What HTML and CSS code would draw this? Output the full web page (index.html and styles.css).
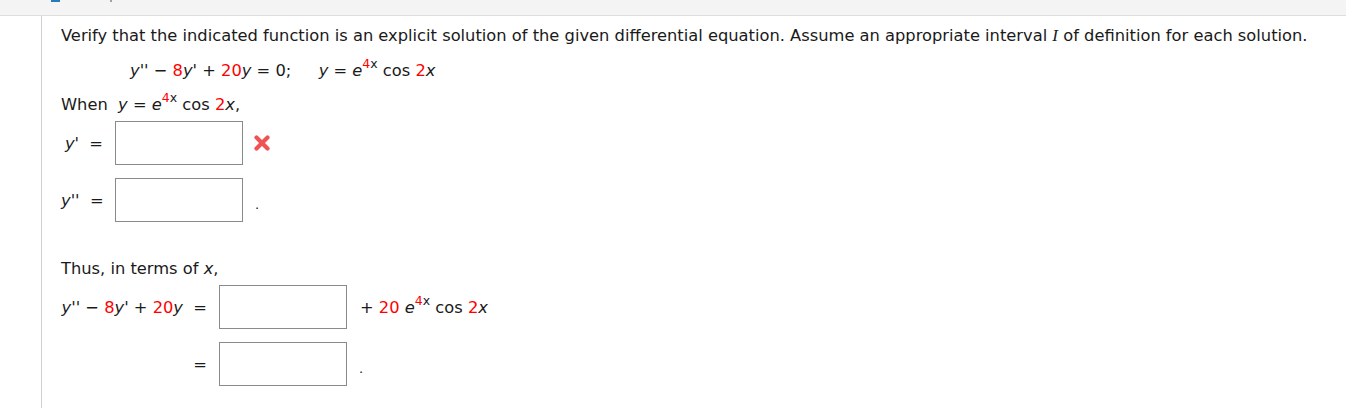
FILE: index.html
```html
<!DOCTYPE html>
<html lang="en">

<head>
    <meta charset="UTF-8">
    <title>Explicit Solution Check</title>
    <link rel="stylesheet" href="styles.css">
</head>

<body>
    <div class="topbar">
        <span class="tab-blue"></span>
        <span class="tab-grey"></span>
    </div>

    <div class="page">
        <div class="gutter"></div>
        <div class="question">
            <p class="prompt">Verify that the indicated function is an explicit solution of the given differential equation. Assume an appropriate interval <span class="serif-i">I</span> of definition for each solution.</p>

            <p class="equation">
                <i>y</i>'' &minus; <span class="red">8</span><i>y</i>' + <span class="red">20</span><i>y</i> = 0;
                <span class="space"></span>
                <i>y</i> = <i>e</i><sup><span class="red">4</span>x</sup> cos <span class="red">2</span><i>x</i>
            </p>

            <p class="when">When &nbsp;<i>y</i> = <i>e</i><sup><span class="red">4</span>x</sup> cos <span class="red">2</span><i>x</i>,</p>

            <!-- derivatives -->
            <div class="answer-row first">
                <span class="label"><i>y</i>' &nbsp;=</span>
                <input type="text" class="answer">
                <span class="mark">
                    <svg width="18" height="18" viewBox="0 0 18 18">
                        <path d="M3.5 3.5 L14.5 14.5 M14.5 3.5 L3.5 14.5" stroke="#f05353" stroke-width="4.2" stroke-linecap="round"/>
                    </svg>
                </span>
            </div>

            <div class="answer-row">
                <span class="label"><i>y</i>'' &nbsp;=</span>
                <input type="text" class="answer">
                <span class="dot">.</span>
            </div>

            <p class="thus">Thus, in terms of <i>x</i>,</p>

            <div class="answer-row sub">
                <span class="label wide"><i>y</i>'' &minus; <span class="red">8</span><i>y</i>' + <span class="red">20</span><i>y</i> &nbsp;=</span>
                <input type="text" class="answer">
                <span class="tail">+ <span class="red">20</span> <i>e</i><sup><span class="red">4</span>x</sup> cos <span class="red">2</span><i>x</i></span>
            </div>

            <div class="answer-row">
                <span class="label wide">=</span>
                <input type="text" class="answer">
                <span class="dot">.</span>
            </div>
        </div>
    </div>
</body>

</html>
```

FILE: styles.css
```css
body {
    margin: 0;
    font-family: "DejaVu Sans", Verdana, sans-serif;
    font-size: 16.3px;
    color: #1a1a1a;
    background: #fff;
}

.topbar {
    height: 15px;
    background-color: #f4f4f4;
    border-bottom: 1px solid #dedede;
    position: relative;
}

.tab-blue {
    position: absolute;
    left: 51px;
    top: 0;
    width: 9px;
    height: 2px;
    background: #2b7bb9;
}

.tab-grey {
    position: absolute;
    left: 110px;
    top: 0;
    width: 2px;
    height: 2px;
    background: #9aa4b0;
}

.page {
    display: flex;
    min-height: 392px;
}

.gutter {
    width: 41px;
    border-right: 1px solid #d0d0d0;
}

.question {
    padding-left: 19px;
}

p {
    margin: 0;
}

.prompt {
    margin-top: 10px;
    line-height: 20px;
}

.serif-i {
    font-family: "Liberation Serif", serif;
    font-style: italic;
    font-size: 17px;
}

.equation {
    margin-top: 13px;
    padding-left: 69px;
    line-height: 24px;
}

.space {
    display: inline-block;
    width: 17px;
}

.red {
    color: #f00;
}

sup {
    font-size: 12.5px;
    line-height: 0;
    vertical-align: 8px;
}

.when {
    margin-top: 10px;
    line-height: 24px;
}

.answer-row {
    display: flex;
    align-items: center;
    margin-top: 13px;
}

.answer-row.first {
    margin-top: 4px;
}

.answer-row.sub {
    margin-top: 4px;
}

.label {
    width: 42px;
    text-align: right;
    white-space: nowrap;
}

.label.wide {
    width: 146px;
}

.answer {
    width: 128px;
    height: 44px;
    margin-left: 12px;
    box-sizing: border-box;
    border: 1px solid #8a8a8a;
    padding: 0;
}

.mark {
    margin-left: 10px;
    display: flex;
}

.dot {
    margin-left: 12px;
    margin-top: 8px;
    font-size: 13px;
}

.tail {
    margin-left: 13px;
}

.thus {
    margin-top: 35px;
    line-height: 24px;
}
```
